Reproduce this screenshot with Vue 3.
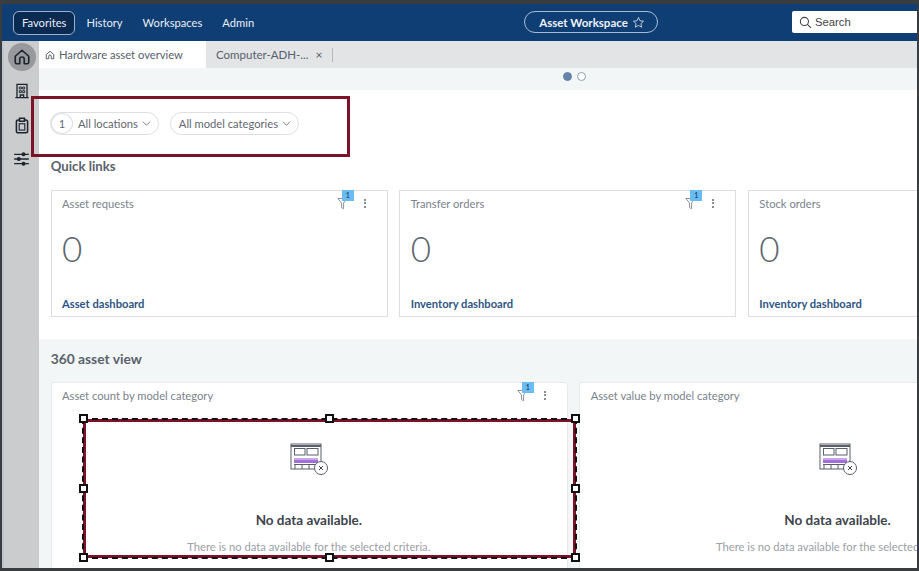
<template>
  <div class="screen">
    <header class="topbar">
      <nav class="menu">
        <a v-for="item in menu" :key="item" class="menu-item" :class="{ active: item === 'Favorites' }">{{ item }}</a>
      </nav>
      <button class="workspace">
        Asset Workspace
        <svg width="13" height="13" viewBox="0 0 24 24" fill="none" stroke="#c9d4e2" stroke-width="1.7">
          <path d="M12 2.8l2.8 6.1 6.6.7-4.9 4.5 1.4 6.6L12 17.4l-5.9 3.3 1.4-6.6-4.9-4.5 6.6-.7z" />
        </svg>
      </button>
      <div class="search">
        <svg width="13" height="13" viewBox="0 0 24 24" fill="none" stroke="#444" stroke-width="2">
          <circle cx="10" cy="10" r="7.5" />
          <path d="M15.5 15.5L22 22" />
        </svg>
        <span>Search</span>
      </div>
    </header>

    <div class="main">
      <aside class="rail">
        <div class="rail-btn current">
          <svg width="18" height="18" viewBox="0 0 24 24" fill="none" stroke="#1d2530" stroke-width="2.2" stroke-linejoin="round">
            <path d="M3 11l9-8 9 8v8a2 2 0 0 1-2 2h-4v-6a3 3 0 0 0-6 0v6H5a2 2 0 0 1-2-2z" />
          </svg>
        </div>
        <div class="rail-btn">
          <svg width="14" height="16" viewBox="0 0 21 24" fill="none" stroke="#1d2530" stroke-width="2">
            <path d="M3 22V2h15v20M0.5 22h20M8 22v-4h5v4" />
            <path d="M6.5 6h3v3h-3zM11.5 6h3v3h-3zM6.5 11.5h3v3h-3zM11.5 11.5h3v3h-3z" stroke-width="1.4" />
          </svg>
        </div>
        <div class="rail-btn">
          <svg width="14" height="17" viewBox="0 0 20 24" fill="none" stroke="#1d2530" stroke-width="2.2">
            <rect x="2" y="4" width="16" height="18.5" rx="2.5" />
            <path d="M6.5 1.5h7v4.5h-7z" fill="#cbcccd" />
            <rect x="6" y="9.5" width="8" height="9" stroke-width="1.6" />
          </svg>
        </div>
        <div class="rail-btn">
          <svg width="17" height="16" viewBox="0 0 24 24" fill="#1d2530" stroke="#1d2530" stroke-width="2">
            <path d="M1 5h22M1 12h22M1 19h22" />
            <circle cx="15" cy="5" r="2" />
            <circle cx="8" cy="12" r="2" />
            <circle cx="15" cy="19" r="2" />
          </svg>
        </div>
      </aside>

      <div class="content">
        <div class="tabs">
          <div class="tab selected">
            <svg width="10" height="10" viewBox="0 0 24 24" fill="none" stroke="#4c5560" stroke-width="2.2">
              <path d="M3 11l9-8 9 8v10h-6v-6a3 3 0 0 0-6 0v6H3z" />
            </svg>
            Hardware asset overview
          </div>
          <div class="tab">
            Computer-ADH-...
            <span class="tab-close">×</span>
          </div>
          <span class="tab-sep"></span>
        </div>

        <div class="pager">
          <span class="dot on"></span>
          <span class="dot"></span>
        </div>

        <section class="white-panel">
          <div class="filters">
            <div class="pill">
              <span class="count">1</span>
              <span class="pill-label">All locations</span>
              <svg class="chev" width="9" height="5" viewBox="0 0 12 7" fill="none" stroke="#5f6770" stroke-width="1.2"><path d="M1 1l5 5 5-5" /></svg>
            </div>
            <div class="pill plain">
              <span class="pill-label">All model categories</span>
              <svg class="chev" width="9" height="5" viewBox="0 0 12 7" fill="none" stroke="#5f6770" stroke-width="1.2"><path d="M1 1l5 5 5-5" /></svg>
            </div>
          </div>
          <h2 class="heading quick">Quick links</h2>
          <div class="link-cards">
            <div v-for="c in links" :key="c.title" class="link-card">
              <div class="card-head">
                <span class="card-title">{{ c.title }}</span>
                <div v-if="c.tools" class="tools">
                  <span class="filter">
                    <svg width="11" height="13" viewBox="0 0 11 13" fill="none" stroke="#8a929a" stroke-width="1"><path d="M.8 1.5h9.4L6.6 6v5.8L4.6 10.6V6z" /></svg>
                    <b class="badge">1</b>
                  </span>
                  <span class="kebab"><i></i><i></i><i></i></span>
                </div>
              </div>
              <div class="big-num">0</div>
              <a class="card-link">{{ c.link }}</a>
            </div>
          </div>
        </section>

        <section class="grey-panel">
          <h2 class="heading view">360 asset view</h2>
          <div class="chart-cards">
            <div v-for="(c, i) in charts" :key="c" class="chart-card">
              <div class="card-head">
                <span class="card-title">{{ c }}</span>
                <div v-if="i === 0" class="tools">
                  <span class="filter">
                    <svg width="11" height="13" viewBox="0 0 11 13" fill="none" stroke="#8a929a" stroke-width="1"><path d="M.8 1.5h9.4L6.6 6v5.8L4.6 10.6V6z" /></svg>
                    <b class="badge">1</b>
                  </span>
                  <span class="kebab"><i></i><i></i><i></i></span>
                </div>
              </div>
              <div class="empty">
                <svg class="empty-icon" width="40" height="36" viewBox="0 0 40 36" fill="none">
                  <rect x="1" y="1" width="30" height="25" fill="#fff" stroke="#59606b" stroke-width="1" />
                  <path d="M1 3h30" stroke="#59606b" stroke-width="2" />
                  <rect x="4.5" y="5.5" width="10.5" height="6.5" stroke="#59606b" />
                  <rect x="17" y="5.5" width="11" height="6.5" stroke="#59606b" />
                  <rect x="4" y="15" width="24" height="2" fill="#c7a8e8" />
                  <rect x="4" y="17" width="24" height="3" fill="#a46fd8" />
                  <path d="M5 22v4M12 22v4M19 22v4M26 22v4M4 21.5h24" stroke="#59606b" />
                  <circle cx="31" cy="25" r="6.5" fill="#fff" stroke="#59606b" />
                  <path d="M29 23l4 4M33 23l-4 4" stroke="#444" />
                </svg>
                <div class="empty-title">No data available.</div>
                <div class="empty-text">There is no data available for the selected criteria.</div>
              </div>
            </div>
          </div>
        </section>
      </div>
    </div>

    <!-- annotation overlays from the doc tool -->
    <div class="mark-filters"></div>
    <div class="mark-chart">
      <i v-for="h in handles" :key="h" class="handle" :class="h"></i>
    </div>
  </div>
</template>

<script setup>
const menu = ['Favorites', 'History', 'Workspaces', 'Admin']

const links = [
  { title: 'Asset requests', link: 'Asset dashboard', tools: true },
  { title: 'Transfer orders', link: 'Inventory dashboard', tools: true },
  { title: 'Stock orders', link: 'Inventory dashboard', tools: false }
]

const charts = ['Asset count by model category', 'Asset value by model category']

const handles = ['tl', 'tc', 'tr', 'ml', 'mr', 'bl', 'bc', 'br']
</script>

<style>
html,
body {
  margin: 0;
  background: #333;
}
</style>

<style scoped>
.screen {
  position: relative;
  width: 919px;
  height: 571px;
  box-sizing: border-box;
  padding: 4px 2px 3px 2px;
  background: #3a3d40;
  overflow: hidden;
  font-family: Lato, "Noto Sans", sans-serif;
  color: #5f6770;
}

.topbar {
  height: 37px;
  background: #0f3e75;
  display: flex;
  align-items: center;
  position: relative;
  color: #e8edf4;
  font-size: 11.2px;
}

.menu {
  display: flex;
  align-items: center;
  gap: 0;
  padding-left: 11px;
}

.menu-item {
  padding: 0 9px;
  height: 24px;
  line-height: 22px;
  box-sizing: border-box;
  border: 1px solid transparent;
  border-radius: 6px;
}

.menu-item.active {
  background: #0a2a52;
  border-color: #9db2cb;
  padding: 0 8px;
  margin-right: 1px;
}

.workspace {
  position: absolute;
  left: 522px;
  top: 7px;
  width: 134px;
  height: 22px;
  box-sizing: border-box;
  border: 1px solid #a9bbd1;
  border-radius: 12px;
  background: transparent;
  color: #eef2f7;
  font: 700 11.5px Lato, sans-serif;
  display: flex;
  align-items: center;
  justify-content: center;
  gap: 4px;
  padding: 0 0 0 2px;
}

.search {
  position: absolute;
  left: 790px;
  top: 7px;
  right: 0;
  height: 22px;
  background: #fff;
  border-radius: 2px 0 0 2px;
  display: flex;
  align-items: center;
  gap: 3px;
  padding-left: 7px;
  color: #444;
  font: 11.3px "Liberation Sans", sans-serif;
}

.main {
  display: flex;
  height: 527px;
}

.rail {
  width: 37px;
  flex: none;
  box-sizing: border-box;
  border-left: 2px solid #b8c8ce;
  background: #cbcccd;
  display: flex;
  flex-direction: column;
  align-items: center;
  padding-top: 2px;
  gap: 6px;
}

.rail-btn {
  width: 28px;
  height: 28px;
  display: flex;
  align-items: center;
  justify-content: center;
  border-radius: 50%;
}

.rail-btn.current {
  background: #97999c;
}

.content {
  flex: 1;
  min-width: 0;
  overflow: hidden;
}

.tabs {
  height: 27px;
  background: #e2e4e6;
  display: flex;
  align-items: center;
}

.tab {
  height: 27px;
  box-sizing: border-box;
  display: flex;
  align-items: center;
  padding-left: 6px;
  gap: 4px;
  font-size: 11.2px;
  color: #55606b;
  white-space: nowrap;
}

.tab.selected {
  width: 167px;
  background: #fff;
}

.tab:not(.selected) {
  padding-left: 10px;
  gap: 7px;
  width: 126px;
  font-size: 11.5px;
}

.tab-close {
  font-size: 12px;
}

.tab-sep {
  width: 1px;
  height: 14px;
  background: #b5b9bd;
}

.pager {
  height: 22px;
  background: #f3f6f6;
  display: flex;
  align-items: center;
  justify-content: center;
  gap: 5px;
  padding-left: 191px;
  padding-bottom: 6px;
  box-sizing: border-box;
  width: 880px;
}

.dot {
  width: 9px;
  height: 9px;
  box-sizing: border-box;
  border-radius: 50%;
  border: 1px solid #8a9fba;
  background: #fff;
}

.dot.on {
  background: #6583ab;
  border-color: #6583ab;
}

.white-panel {
  background: #fff;
  height: 249px;
  padding: 22px 0 0 11.7px;
  box-sizing: border-box;
}

.filters {
  display: flex;
  gap: 11px;
  margin-left: -0.7px;
}

.pill {
  height: 23px;
  box-sizing: border-box;
  border: 1px solid #dcdfe2;
  border-radius: 12px;
  display: flex;
  align-items: center;
  font-size: 11.2px;
  color: #5f6770;
  gap: 4px;
  padding-right: 7px;
}

.pill.plain {
  padding-left: 8px;
}

.count {
  width: 22px;
  height: 21px;
  box-sizing: border-box;
  border: 1px solid #dcdfe2;
  border-radius: 50%;
  text-align: center;
  line-height: 19px;
  margin-right: 1px;
}

.heading {
  margin: 0;
  font-weight: 700;
  line-height: 18px;
  color: #5a626b;
}

.quick {
  font-size: 13.2px;
  margin-top: 22px;
}

.view {
  font-size: 13.8px;
}

.link-cards {
  display: flex;
  gap: 11.7px;
  margin-top: 15px;
}

.link-card {
  width: 337px;
  height: 127px;
  flex: none;
  box-sizing: border-box;
  border: 1px solid #dcdfe2;
  padding: 5px 11px 5px 10.3px;
}

.card-head {
  display: flex;
  align-items: center;
  justify-content: space-between;
  height: 14px;
}

.card-title {
  font-size: 11.2px;
  color: #7a828a;
}

.tools {
  display: flex;
  align-items: center;
  gap: 16px;
  margin-right: 10px;
}

.filter {
  position: relative;
  display: flex;
}

.badge {
  position: absolute;
  left: 5px;
  top: -7px;
  width: 12px;
  height: 11px;
  background: #6bbcf0;
  color: #26507a;
  font: 700 7px/11px Lato, sans-serif;
  text-align: center;
}

.kebab {
  display: flex;
  flex-direction: column;
  gap: 1.5px;
}

.kebab i {
  width: 2px;
  height: 2px;
  border-radius: 50%;
  background: #5f6770;
}

.big-num {
  font-size: 35px;
  font-weight: 300;
  line-height: 40px;
  margin-top: 18px;
  color: #5c646d;
}

.card-link {
  display: block;
  margin-top: 29px;
  font-size: 11.2px;
  font-weight: 700;
  color: #2e5484;
}

.grey-panel {
  background: #f3f6f6;
  height: 230px;
  padding: 11px 0 0 11.7px;
  box-sizing: border-box;
}

.chart-cards {
  display: flex;
  gap: 11.7px;
  margin-top: 14px;
}

.chart-card {
  width: 517px;
  height: 200px;
  flex: none;
  box-sizing: border-box;
  background: #fff;
  border: 1px solid #e8eaec;
  border-radius: 3px 3px 0 0;
  padding: 5px 11px 5px 10.3px;
}

.empty {
  display: flex;
  flex-direction: column;
  align-items: center;
  padding-top: 41px;
}

.empty-icon {
  margin-left: 2px;
}

.empty-title {
  margin-top: 33px;
  font-size: 13.5px;
  font-weight: 700;
  color: #3d444c;
}

.empty-text {
  margin-top: 12px;
  font-size: 11.2px;
  color: #9aa0a6;
  white-space: nowrap;
}

.mark-filters {
  position: absolute;
  left: 31px;
  top: 96px;
  width: 319px;
  height: 61px;
  box-sizing: border-box;
  border: 3px solid #7d1128;
}

.mark-chart {
  position: absolute;
  left: 83px;
  top: 419px;
  width: 493px;
  height: 139px;
  box-sizing: border-box;
  border: 3px solid #7d1128;
  outline: 2px dashed #111;
  outline-offset: -1px;
  box-shadow: 0 0 0 1px rgba(255, 255, 255, 0.85);
}

.handle {
  position: absolute;
  width: 9px;
  height: 9px;
  box-sizing: border-box;
  background: #fff;
  border: 2px solid #111;
}

.tl, .tc, .tr { top: -8px; }
.ml, .mr { top: 62px; }
.bl, .bc, .br { bottom: -7px; }
.tl, .ml, .bl { left: -7px; }
.tc, .bc { left: 239px; }
.tr, .mr, .br { right: -7px; }
</style>
